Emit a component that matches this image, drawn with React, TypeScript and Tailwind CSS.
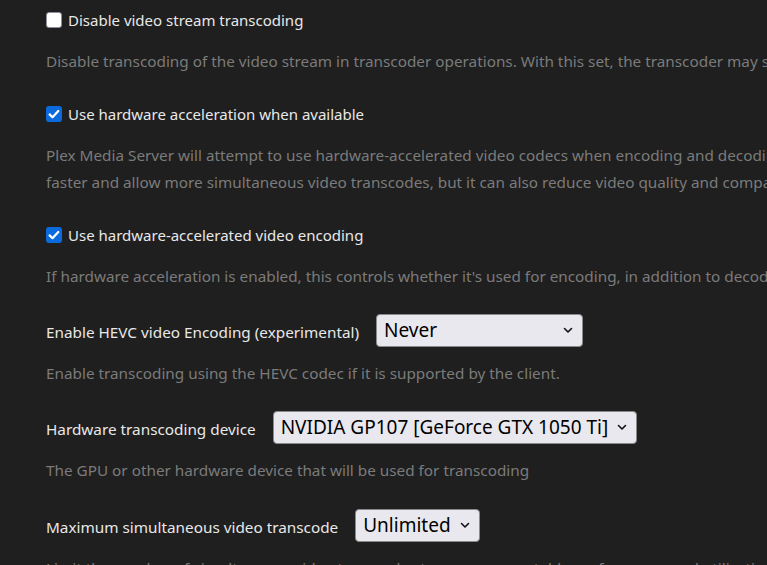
import * as React from 'react';

function Check({checked}: {checked: boolean}) {
    if (!checked) {
        return <span className="block h-4 w-4 shrink-0 rounded-[3px] border border-[#8f8f9d] bg-white" />;
    }
    return (
        <span className="flex h-4 w-4 shrink-0 items-center justify-center rounded-[3px] bg-[#0b6bde]">
            <svg viewBox="0 0 16 16" className="h-4 w-4" fill="none">
                <path d="M3.6 8.4l2.9 2.8 5.8-6.2" stroke="#fff" strokeWidth="2.2" strokeLinecap="round" strokeLinejoin="round" />
            </svg>
        </span>
    );
}

function Select({value, width}: {value: string; width: string}) {
    return (
        <div className={`${width} flex h-[33px] items-center justify-between rounded-[4px] border border-[#8a8a8a] bg-[#e9e8ee] pl-[7px] pr-[8px] text-[19px] text-black`}>
            <span className="leading-none">{value}</span>
            <svg viewBox="0 0 12 12" className="ml-2 h-3 w-3" fill="none">
                <path d="M2.5 4.5L6 8l3.5-3.5" stroke="#111" strokeWidth="1.6" strokeLinecap="round" strokeLinejoin="round" />
            </svg>
        </div>
    );
}

function Desc({lines, className}: {lines: string[]; className: string}) {
    return (
        <p className={`${className} whitespace-nowrap text-[15.3px] leading-[27px] text-[#7b7b7b]`}>
            {lines.map((l, i) => (
                <React.Fragment key={i}>
                    {l}
                    {i < lines.length - 1 && <br />}
                </React.Fragment>
            ))}
        </p>
    );
}

function CheckRow({checked, label, lines, className = ''}: {checked: boolean; label: string; lines: string[]; className?: string}) {
    return (
        <div className={`flex flex-col ${className}`}>
            <label className="flex h-[40px] items-center gap-[6px] text-[#e8e8e8]">
                <Check checked={checked} />
                <span>{label}</span>
            </label>
            <Desc className="mt-[8px]" lines={lines} />
        </div>
    );
}

function SelectRow({label, value, width, desc, className = ''}: {label: string; value: string; width: string; desc: string; className?: string}) {
    return (
        <div className={`flex flex-col ${className}`}>
            <div className="flex h-[40px] items-center gap-[17px] text-[15.3px] text-[#e8e8e8]">
                <span className="pt-[5px]">{label}</span>
                <Select value={value} width={width} />
            </div>
            <Desc className="mt-[10px]" lines={[desc]} />
        </div>
    );
}

export default function App() {
    return (
        <div
            className="h-[565px] w-[767px] overflow-hidden bg-[#1f1f1f] text-[15px]"
            style={{fontFamily: '"Noto Sans", "Open Sans", sans-serif'}}
        >
            <div className="flex w-[1400px] flex-col pl-[46px]">
                <CheckRow
                    checked={false}
                    label="Disable video stream transcoding"
                    lines={['Disable transcoding of the video stream in transcoder operations. With this set, the transcoder may still transcode the audio stream.']}
                />
                <CheckRow
                    className="mt-[19px]"
                    checked={true}
                    label="Use hardware acceleration when available"
                    lines={[
                        'Plex Media Server will attempt to use hardware-accelerated video codecs when encoding and decoding video. Hardware acceleration can make transcoding',
                        'faster and allow more simultaneous video transcodes, but it can also reduce video quality and compatibility.',
                    ]}
                />
                <CheckRow
                    className="mt-[19px]"
                    checked={true}
                    label="Use hardware-accelerated video encoding"
                    lines={["If hardware acceleration is enabled, this controls whether it's used for encoding, in addition to decoding."]}
                />
                <SelectRow
                    className="mt-[20px]"
                    label="Enable HEVC video Encoding (experimental)"
                    value="Never"
                    width="w-[207px]"
                    desc="Enable transcoding using the HEVC codec if it is supported by the client."
                />
                <SelectRow
                    className="mt-[20px]"
                    label="Hardware transcoding device"
                    value="NVIDIA GP107 [GeForce GTX 1050 Ti]"
                    width="w-auto"
                    desc="The GPU or other hardware device that will be used for transcoding"
                />
                <SelectRow
                    className="mt-[21px]"
                    label="Maximum simultaneous video transcode"
                    value="Unlimited"
                    width="w-auto"
                    desc="Limit the number of simultaneous video transcodes to ensure acceptable performance and utilization."
                />
            </div>
        </div>
    );
}
